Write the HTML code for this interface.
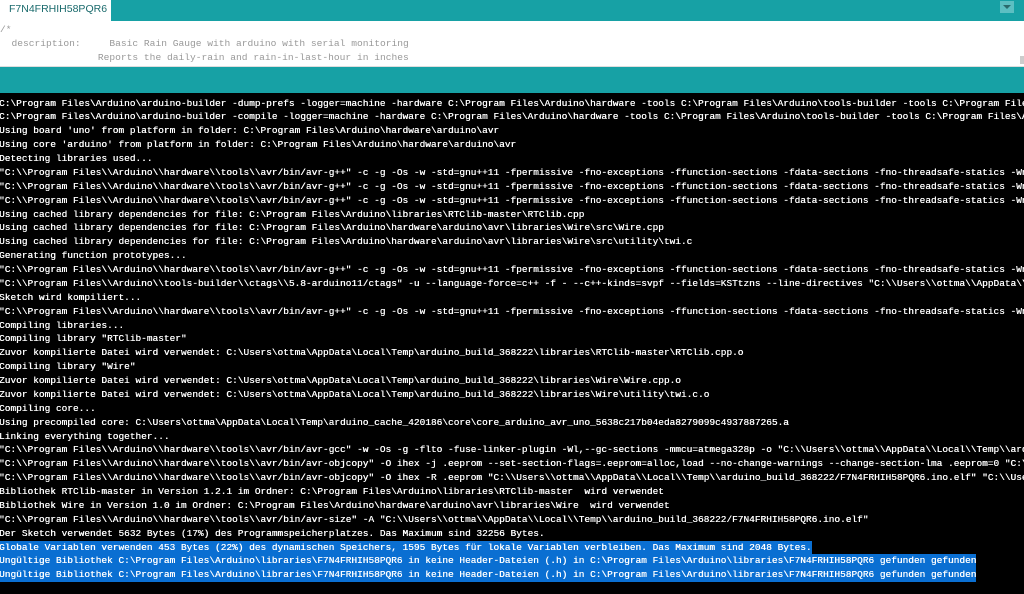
<!DOCTYPE html>
<html><head><meta charset="utf-8"><style>
html,body{margin:0;padding:0;width:1024px;height:594px;overflow:hidden;background:#000;}
#hdr{position:absolute;left:0;top:0;width:1024px;height:21px;background:#17a1a5;}
#tab{position:absolute;left:0;top:0;width:111px;height:21px;background:#fff;font:10.5px "Liberation Sans",sans-serif;color:#1a6a6c;line-height:19px;text-indent:9px;}
#dd{position:absolute;left:1000px;top:1px;width:14px;height:12px;background:#5cbfc2;}
#dd:after{content:"";position:absolute;left:3px;top:4px;border-left:4px solid transparent;border-right:4px solid transparent;border-top:4px solid #2a6a6c;}
#ed{position:absolute;left:0;top:21px;width:1024px;height:45px;background:#fff;border-bottom:1px solid #ddd;}
#ed pre{margin:0;position:absolute;left:0;top:2px;font:9.6px "Liberation Mono",monospace;line-height:14px;color:#999;}
#sb{position:absolute;left:1020px;top:35px;width:4px;height:8px;background:#ccc;}
#bar{position:absolute;left:0;top:67px;width:1024px;height:26px;background:#17a1a5;}
#clip{position:absolute;left:0;top:93px;width:1024px;height:501px;overflow:hidden;}
#con{position:absolute;left:-1px;top:3.5px;margin:0;font:9.48px "Liberation Mono",monospace;line-height:13.87px;color:#fff;white-space:pre;text-shadow:0.3px 0 0 #fff;}
.h{background:#0a6fd2;display:inline-block;height:13.87px;vertical-align:top;}
</style></head><body>
<div id="hdr"></div><div id="tab">F7N4FRHIH58PQR6</div><div id="dd"></div>
<div id="ed"><pre>/*
  description:     Basic Rain Gauge with arduino with serial monitoring
                 Reports the daily-rain and rain-in-last-hour in inches</pre><div id="sb"></div></div>
<div id="bar"></div>
<div id="clip"><pre id="con">C:\Program Files\Arduino\arduino-builder -dump-prefs -logger=machine -hardware C:\Program Files\Arduino\hardware -tools C:\Program Files\Arduino\tools-builder -tools C:\Program Files\Arduino
C:\Program Files\Arduino\arduino-builder -compile -logger=machine -hardware C:\Program Files\Arduino\hardware -tools C:\Program Files\Arduino\tools-builder -tools C:\Program Files\Arduino
Using board 'uno' from platform in folder: C:\Program Files\Arduino\hardware\arduino\avr
Using core 'arduino' from platform in folder: C:\Program Files\Arduino\hardware\arduino\avr
Detecting libraries used...
"C:\\Program Files\\Arduino\\hardware\\tools\\avr/bin/avr-g++" -c -g -Os -w -std=gnu++11 -fpermissive -fno-exceptions -ffunction-sections -fdata-sections -fno-threadsafe-statics -Wno
"C:\\Program Files\\Arduino\\hardware\\tools\\avr/bin/avr-g++" -c -g -Os -w -std=gnu++11 -fpermissive -fno-exceptions -ffunction-sections -fdata-sections -fno-threadsafe-statics -Wno
"C:\\Program Files\\Arduino\\hardware\\tools\\avr/bin/avr-g++" -c -g -Os -w -std=gnu++11 -fpermissive -fno-exceptions -ffunction-sections -fdata-sections -fno-threadsafe-statics -Wno
Using cached library dependencies for file: C:\Program Files\Arduino\libraries\RTClib-master\RTClib.cpp
Using cached library dependencies for file: C:\Program Files\Arduino\hardware\arduino\avr\libraries\Wire\src\Wire.cpp
Using cached library dependencies for file: C:\Program Files\Arduino\hardware\arduino\avr\libraries\Wire\src\utility\twi.c
Generating function prototypes...
"C:\\Program Files\\Arduino\\hardware\\tools\\avr/bin/avr-g++" -c -g -Os -w -std=gnu++11 -fpermissive -fno-exceptions -ffunction-sections -fdata-sections -fno-threadsafe-statics -Wno
"C:\\Program Files\\Arduino\\tools-builder\\ctags\\5.8-arduino11/ctags" -u --language-force=c++ -f - --c++-kinds=svpf --fields=KSTtzns --line-directives "C:\\Users\\ottma\\AppData\\
Sketch wird kompiliert...
"C:\\Program Files\\Arduino\\hardware\\tools\\avr/bin/avr-g++" -c -g -Os -w -std=gnu++11 -fpermissive -fno-exceptions -ffunction-sections -fdata-sections -fno-threadsafe-statics -Wno
Compiling libraries...
Compiling library "RTClib-master"
Zuvor kompilierte Datei wird verwendet: C:\Users\ottma\AppData\Local\Temp\arduino_build_368222\libraries\RTClib-master\RTClib.cpp.o
Compiling library "Wire"
Zuvor kompilierte Datei wird verwendet: C:\Users\ottma\AppData\Local\Temp\arduino_build_368222\libraries\Wire\Wire.cpp.o
Zuvor kompilierte Datei wird verwendet: C:\Users\ottma\AppData\Local\Temp\arduino_build_368222\libraries\Wire\utility\twi.c.o
Compiling core...
Using precompiled core: C:\Users\ottma\AppData\Local\Temp\arduino_cache_420186\core\core_arduino_avr_uno_5638c217b04eda8279099c4937887265.a
Linking everything together...
"C:\\Program Files\\Arduino\\hardware\\tools\\avr/bin/avr-gcc" -w -Os -g -flto -fuse-linker-plugin -Wl,--gc-sections -mmcu=atmega328p -o "C:\\Users\\ottma\\AppData\\Local\\Temp\\ardu
"C:\\Program Files\\Arduino\\hardware\\tools\\avr/bin/avr-objcopy" -O ihex -j .eeprom --set-section-flags=.eeprom=alloc,load --no-change-warnings --change-section-lma .eeprom=0 "C:\\U
"C:\\Program Files\\Arduino\\hardware\\tools\\avr/bin/avr-objcopy" -O ihex -R .eeprom "C:\\Users\\ottma\\AppData\\Local\\Temp\\arduino_build_368222/F7N4FRHIH58PQR6.ino.elf" "C:\\User
Bibliothek RTClib-master in Version 1.2.1 im Ordner: C:\Program Files\Arduino\libraries\RTClib-master  wird verwendet
Bibliothek Wire in Version 1.0 im Ordner: C:\Program Files\Arduino\hardware\arduino\avr\libraries\Wire  wird verwendet
"C:\\Program Files\\Arduino\\hardware\\tools\\avr/bin/avr-size" -A "C:\\Users\\ottma\\AppData\\Local\\Temp\\arduino_build_368222/F7N4FRHIH58PQR6.ino.elf"
Der Sketch verwendet 5632 Bytes (17%) des Programmspeicherplatzes. Das Maximum sind 32256 Bytes.
<span class="h">Globale Variablen verwenden 453 Bytes (22%) des dynamischen Speichers, 1595 Bytes für lokale Variablen verbleiben. Das Maximum sind 2048 Bytes.</span>
<span class="h">Ungültige Bibliothek C:\Program Files\Arduino\libraries\F7N4FRHIH58PQR6 in keine Header-Dateien (.h) in C:\Program Files\Arduino\libraries\F7N4FRHIH58PQR6 gefunden gefunden</span>
<span class="h">Ungültige Bibliothek C:\Program Files\Arduino\libraries\F7N4FRHIH58PQR6 in keine Header-Dateien (.h) in C:\Program Files\Arduino\libraries\F7N4FRHIH58PQR6 gefunden gefunden</span></pre></div>
</body></html>
